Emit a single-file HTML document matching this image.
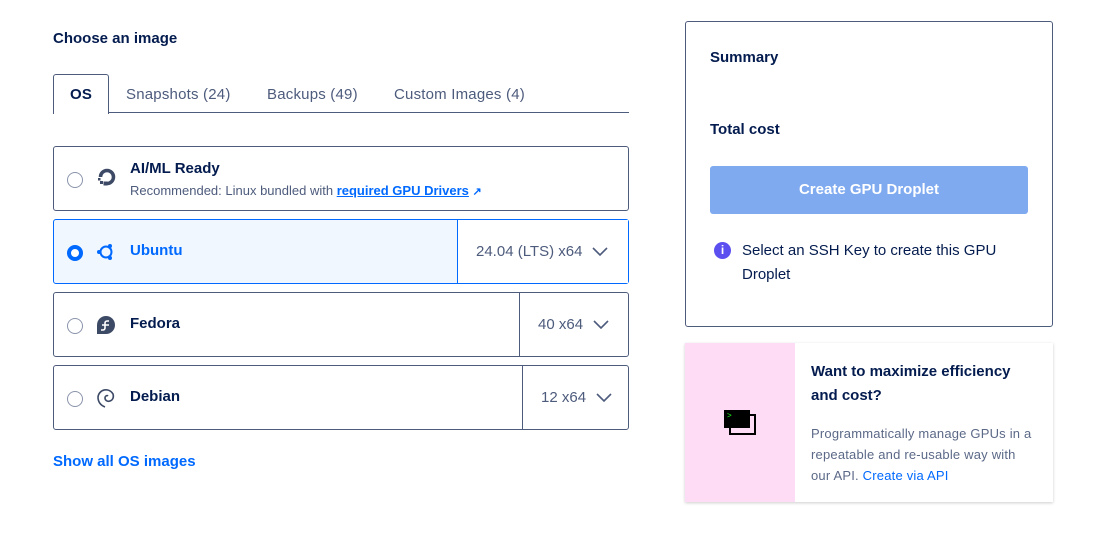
<!DOCTYPE html>
<html><head><meta charset="utf-8"><style>
*{box-sizing:border-box;margin:0;padding:0}
body{width:1113px;height:533px;background:#fff;font-family:"Liberation Sans",sans-serif;color:#031b4e;position:relative;overflow:hidden}
.a{position:absolute}
.t{font-size:15px;font-weight:bold}
.tab{position:absolute;top:86px;font-size:15px;color:#4d5b7c;letter-spacing:0.2px}
.card{position:absolute;left:53px;width:576px;height:65px;border:1px solid #4d5b7c;border-radius:3px}
.radio{position:absolute;left:13px;top:25px;width:16px;height:16px;border:1px solid #8a94ab;border-radius:50%;background:#fff}
.name{position:absolute;left:76px;font-size:15px;font-weight:bold}
.ver{position:absolute;right:0;top:0;height:63px;border-left:1px solid #4d5b7c;font-size:15px;color:#4d5b7c;display:flex;align-items:center;padding-left:18px}
.chev{margin-left:10px;width:16px;height:9px}
</style></head><body>
<div class="a t" style="left:53px;top:30px">Choose an image</div>
<div class="a" style="left:53px;top:112px;width:576px;border-top:1px solid #4d5b7c"></div>
<div class="a" style="left:53px;top:74px;width:56px;height:40px;border:1px solid #4d5b7c;border-bottom:none;border-radius:3px 3px 0 0;background:#fff"></div>
<div class="tab" style="left:70px;color:#031b4e;font-weight:bold">OS</div>
<div class="tab" style="left:126px">Snapshots (24)</div>
<div class="tab" style="left:267px">Backups (49)</div>
<div class="tab" style="left:394px">Custom Images (4)</div>

<div class="card" style="top:146px">
 <div class="radio"></div>
 <svg class="a" style="left:41px;top:18px" width="24" height="24" viewBox="0 0 24 24"><path d="M12 18.5a6.5 6.5 0 1 0-6.5-6.5" fill="none" stroke="#3d4a66" stroke-width="3.5"/><rect x="8.5" y="16.5" width="4" height="4" fill="#3d4a66"/><rect x="5" y="16" width="3" height="3" fill="#3d4a66"/><rect x="3" y="13" width="2.5" height="2.5" fill="#3d4a66"/></svg>
 <div class="name" style="top:13px">AI/ML Ready</div>
 <div class="a" style="left:76px;top:36px;font-size:13px;color:#4d5b7c">Recommended: Linux bundled with <span style="color:#0069ff;font-weight:bold;text-decoration:underline">required GPU Drivers</span> <span style="color:#0069ff;font-size:11px;font-weight:bold">↗</span></div>
</div>
<div class="card" style="top:219px;border-color:#0069ff;background:#f0f7ff">
 <div class="radio" style="border:4px solid #0069ff"></div>
 <svg class="a" style="left:42px;top:22px" width="20" height="20" viewBox="0 0 20 20"><circle cx="10" cy="10" r="5.5" fill="none" stroke="#0069ff" stroke-width="2"/><circle cx="3" cy="10" r="2" fill="#0069ff"/><circle cx="14" cy="4" r="2" fill="#0069ff"/><circle cx="14" cy="16" r="2" fill="#0069ff"/></svg>
 <div class="name" style="top:22px;color:#0069ff">Ubuntu</div>
 <div class="ver" style="width:171px;border-color:#0069ff;background:#fff">24.04 (LTS) x64<svg class="chev" viewBox="0 0 16 9"><path d="M1 1l7 7 7-7" fill="none" stroke="#4d5b7c" stroke-width="1.6"/></svg></div>
</div>
<div class="card" style="top:292px">
 <div class="radio"></div>
 <svg class="a" style="left:42px;top:22px" width="20" height="20" viewBox="0 0 20 20"><path d="M10 1a9 9 0 1 1 0 18H1V10A9 9 0 0 1 10 1z" fill="#3d4a66"/><path d="M13 6h-2a2 2 0 0 0-2 2v5a2 2 0 0 1-2 2H5M6 10h7" fill="none" stroke="#fff" stroke-width="1.6"/></svg>
 <div class="name" style="top:22px">Fedora</div>
 <div class="ver" style="width:109px">40 x64<svg class="chev" viewBox="0 0 16 9"><path d="M1 1l7 7 7-7" fill="none" stroke="#4d5b7c" stroke-width="1.6"/></svg></div>
</div>
<div class="card" style="top:365px">
 <div class="radio"></div>
 <svg class="a" style="left:42px;top:21px" width="20" height="22" viewBox="0 0 20 22"><path d="M9 20C4 18 2 14 2 10a8 8 0 0 1 15-3c1 3 0 6-3 7-3 1-5-1-5-3s2-3 3-2" fill="none" stroke="#3d4a66" stroke-width="1.6"/></svg>
 <div class="name" style="top:22px">Debian</div>
 <div class="ver" style="width:106px">12 x64<svg class="chev" viewBox="0 0 16 9"><path d="M1 1l7 7 7-7" fill="none" stroke="#4d5b7c" stroke-width="1.6"/></svg></div>
</div>
<div class="a" style="left:53px;top:453px;font-size:15px;color:#0069ff;font-weight:bold">Show all OS images</div>

<div class="a" style="left:685px;top:21px;width:368px;height:306px;border:1px solid #4d5b7c;border-radius:3px"></div>
<div class="a t" style="left:710px;top:49px">Summary</div>
<div class="a t" style="left:710px;top:121px">Total cost</div>
<div class="a" style="left:710px;top:166px;width:318px;height:48px;background:#7faaf0;border-radius:3px;color:#fff;font-size:15px;font-weight:bold;text-align:center;line-height:48px">Create GPU Droplet</div>
<div class="a" style="left:714px;top:242px;width:17px;height:17px;border-radius:50%;background:#5b4ff0;color:#fff;font-size:12px;font-weight:bold;text-align:center;line-height:17px">i</div>
<div class="a" style="left:742px;top:239px;width:280px;font-size:15px;line-height:24px">Select an SSH Key to create this GPU Droplet</div>

<div class="a" style="left:685px;top:343px;width:368px;height:159px;background:#fff;box-shadow:0 1px 3px rgba(0,0,0,0.2)"></div>
<div class="a" style="left:685px;top:343px;width:110px;height:159px;background:#ffdcf5"></div>
<div class="a" style="left:729px;top:414px;width:27px;height:21px;border:2px solid #000;background:#ffdcf5"></div>
<div class="a" style="left:724px;top:410px;width:26px;height:18px;background:#000"><span style="position:absolute;left:3px;top:1px;color:#2f2;font-size:8px">&gt;</span></div>
<div class="a t" style="left:811px;top:360px;line-height:24px;width:230px">Want to maximize efficiency and cost?</div>
<div class="a" style="left:811px;top:423px;white-space:nowrap;font-size:13px;line-height:21px;color:#5b6987;letter-spacing:0.2px">Programmatically manage GPUs in a<br>repeatable and re-usable way with<br>our API. <span style="color:#0069ff">Create via API</span></div>
</body></html>
